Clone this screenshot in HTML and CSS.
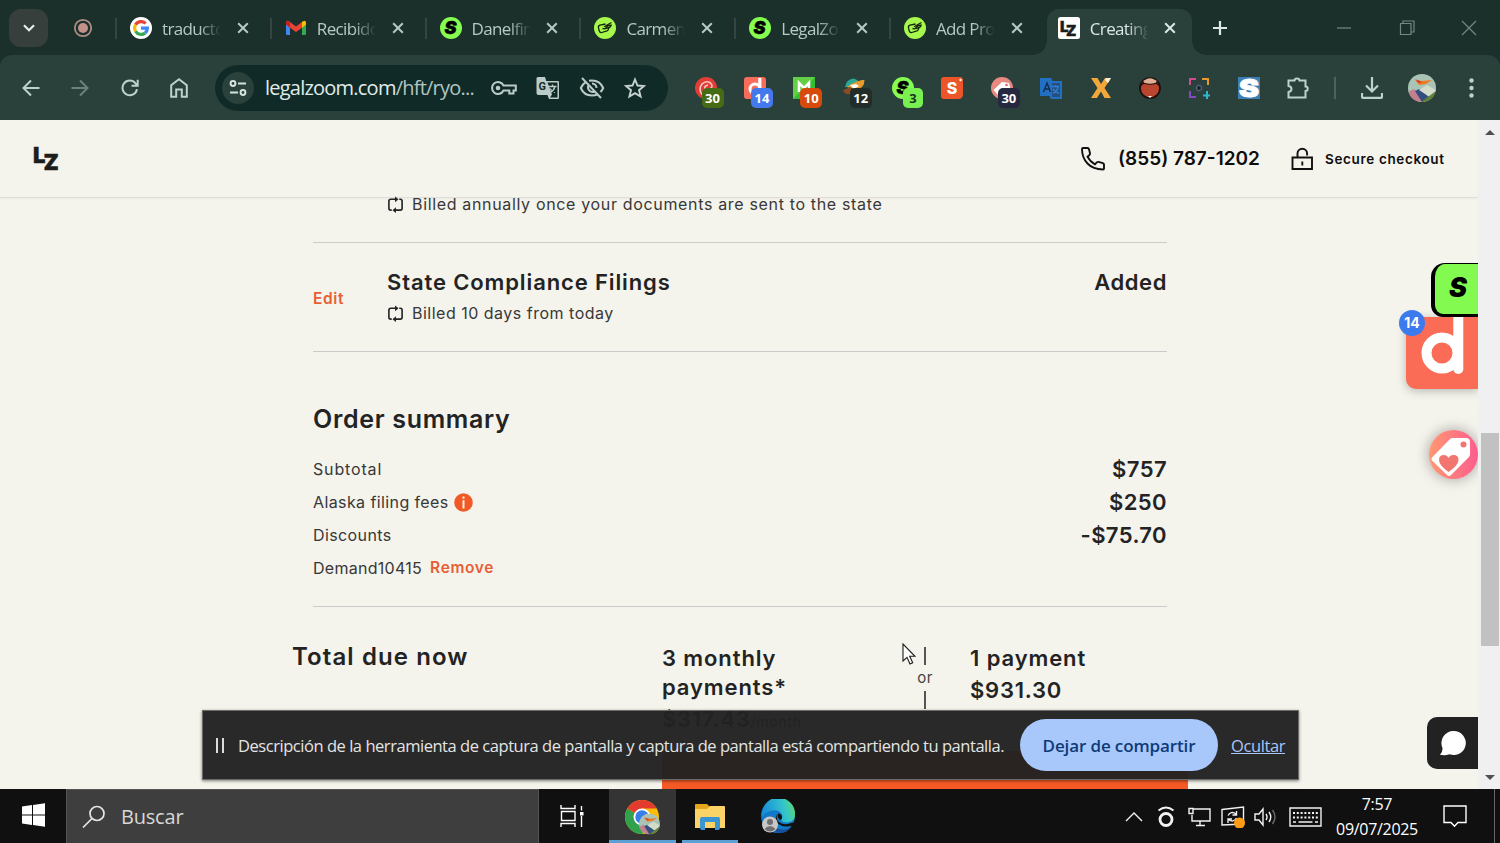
FILE: index.html
```html
<!DOCTYPE html>
<html lang="es">

<head>
    <meta charset="UTF-8">
    <meta name="viewport" content="width=device-width, initial-scale=1.0">
    <title>Creating your order</title>
    <link rel="stylesheet" href="styles.css">
</head>

<body>
    <!-- shared icons -->
    <svg class="defs" width="0" height="0">
        <symbol id="close" viewBox="0 0 12 12">
            <path d="M1.2 1.2l9.6 9.6M10.8 1.2L1.2 10.8" stroke="currentColor" stroke-width="2" fill="none" />
        </symbol>
        <symbol id="fav-s" viewBox="0 0 22 22">
            <circle cx="11" cy="11" r="11" fill="#86fb50" />
            <text x="10.6" y="17.3" text-anchor="middle" font-family="Inter" font-weight="900" font-style="italic" font-size="18" stroke="#000" stroke-width=".5">S</text>
        </symbol>
        <symbol id="fav-sign" viewBox="0 0 22 22">
            <circle cx="11" cy="11" r="11" fill="#a6f94c" />
            <path d="M11.500 7L6 8.200q-2 .7-1.500 2.600l.8 3.200q.5 2 2.500 1.500l5.200-1.700q1.500-.6 1.700-2.300M8.500 11.500l2 .3 2.700-.6M10 9.800l7.500-4.300M11.500 10.800q3-3.300 5.700-2.600-1 2.700-4.200 2.900" fill="none" stroke="#15240d" stroke-width="1.300" />
        </symbol>
        <symbol id="repeat" viewBox="0 0 18 18">
            <path d="M5 15H4Q2 15 2 13V5.500q0-2 2-2H10M13 3.500h1q2 0 2 2V13q0 2-2 2H8" fill="none" stroke="#232323" stroke-width="1.700" />
            <path d="M8.500.5l3.700 3-3.700 3zM9.500 12v6l-3.700-3z" fill="#232323" />
        </symbol>
        <symbol id="avatar" viewBox="0 0 28 28">
            <clipPath id="round"><circle cx="14" cy="14" r="14" /></clipPath>
            <g clip-path="url(#round)">
                <path d="M0 0h28v28H0z" fill="#a9c3b5" />
                <path d="M0 18l6-3 6 6 3 7H0z" fill="#c47f8f" />
                <path d="M7 17l4-2 10 8-7 5z" fill="#334f80" />
                <path d="M11 16l8-5 9 5-6 7z" fill="#d2dccb" />
                <path d="M13 28l15-11v11z" fill="#607f36" />
                <path d="M7 6l7 1 10-1-6 4-7 1z" fill="#ee7a22" />
                <path d="M7 5l7 3-3 1z" fill="#d5332b" />
            </g>
        </symbol>
    </svg>

    <div class="tabstrip">
        <div class="tab-search">
            <svg width="12" height="8" viewBox="0 0 12 8"><path d="M1 1.200l5 5 5-5" fill="none" stroke="#e6eeec" stroke-width="2.200" /></svg>
        </div>
        <div class="tab-pinned">
            <svg width="20" height="20" viewBox="0 0 20 20"><circle cx="10" cy="10" r="8.200" fill="none" stroke="#ab8f86" stroke-width="1.800" /><circle cx="10" cy="10" r="5" fill="#c4908a" /></svg>
        </div>
        <div class="tab">
            <svg class="favicon" viewBox="0 0 22 22">
                <circle cx="11" cy="11" r="11" fill="#fff" />
                <g fill="none" stroke-width="3.200">
                    <path d="M5.500 7.800A6.400 6.400 0 0 1 15.600 6.500" stroke="#ea4335" />
                    <path d="M5.500 14.200A6.400 6.400 0 0 1 5.500 7.800" stroke="#fbbc05" />
                    <path d="M15.100 15.900A6.400 6.400 0 0 1 5.500 14.200" stroke="#34a853" />
                    <path d="M11 11.100H17.400A6.400 6.400 0 0 1 15.100 15.900" stroke="#4285f4" />
                </g>
            </svg>
            <span class="tab-name">traducto</span>
            <svg class="tab-close"><use href="#close" /></svg>
        </div>
        <div class="tab">
            <svg class="favicon" viewBox="0 0 22 22">
                <path d="M1 5.500l4 3V18H2.200Q1 18 1 16.800z" fill="#4285f4" />
                <path d="M21 5.500l-4 3V18h2.800q1.200 0 1.200-1.200z" fill="#34a853" />
                <path d="M17 5l1-.8Q21 2.500 21 6v1.500l-4 3.200z" fill="#fbbc04" />
                <path d="M1 7.500V6Q1 2.500 4 4.200l7 5.300 6-4.500v5.700L11 15 5 10.700z" fill="#ea4335" />
                <path d="M1 7.500V6q0-2 1.600-2.200L5 5.500v5.200z" fill="#c5221f" />
            </svg>
            <span class="tab-name">Recibido</span>
            <svg class="tab-close"><use href="#close" /></svg>
        </div>
        <div class="tab">
            <svg class="favicon"><use href="#fav-s" /></svg>
            <span class="tab-name">Danelfin</span>
            <svg class="tab-close"><use href="#close" /></svg>
        </div>
        <div class="tab">
            <svg class="favicon"><use href="#fav-sign" /></svg>
            <span class="tab-name">Carmen</span>
            <svg class="tab-close"><use href="#close" /></svg>
        </div>
        <div class="tab">
            <svg class="favicon"><use href="#fav-s" /></svg>
            <span class="tab-name">LegalZo</span>
            <svg class="tab-close"><use href="#close" /></svg>
        </div>
        <div class="tab">
            <svg class="favicon"><use href="#fav-sign" /></svg>
            <span class="tab-name">Add Pro</span>
            <svg class="tab-close"><use href="#close" /></svg>
        </div>
        <div class="tab tab-active">
            <svg class="favicon" viewBox="0 0 22 22">
                <rect width="22" height="22" rx="2.500" fill="#fff" />
                <text class="lz" x="2" y="14.500" font-size="15">L</text>
                <text class="lz" x="8" y="18.500" font-size="15">Z</text>
            </svg>
            <span class="tab-name">Creating</span>
            <svg class="tab-close"><use href="#close" /></svg>
        </div>
        <svg class="new-tab" viewBox="0 0 14 14"><path d="M7 0v14M0 7h14" stroke="#dce8e4" stroke-width="2.200" /></svg>
        <div class="window-buttons">
            <svg width="16" height="16" viewBox="0 0 16 16"><path d="M1 8h14" /></svg>
            <svg width="16" height="16" viewBox="0 0 16 16"><path d="M1.500 3.500h10.500v11H1.500zM4 3.500V1h11v11h-3" /></svg>
            <svg width="16" height="16" viewBox="0 0 16 16"><path d="M1 1l14 14M15 1L1 15" /></svg>
        </div>
    </div>

    <div class="toolbar">
        <div class="nav-buttons">
            <svg width="18" height="18" viewBox="0 0 18 18"><path d="M17.500 9H2M9 1.500L1.500 9 9 16.500" /></svg>
            <svg class="dim" width="18" height="18" viewBox="0 0 18 18"><path d="M.5 9H16M9 1.500L16.500 9 9 16.500" /></svg>
            <svg width="18" height="18" viewBox="0 0 18 18"><path d="M16 10.200A7.300 7.300 0 1 1 14.500 4.300L16.500 6.500M16.700.8V6.800H10.500" /></svg>
            <svg width="18" height="20" viewBox="0 0 18 20"><path d="M1.200 18.800V7.200L9 1.300l7.800 5.900v11.600h-5V11.500H6.200v7.300z" /></svg>
        </div>
        <div class="address">
            <div class="site-info">
                <svg width="18" height="16" viewBox="0 0 18 16"><g fill="none" stroke="#d5e3df" stroke-width="2"><circle cx="4" cy="3.500" r="2.400" /><path d="M9 3.500h8M1 12.500h8" /><circle cx="14" cy="12.500" r="2.400" /></g></svg>
            </div>
            <span class="url">legalzoom.com<span class="path">/hft/ryo...</span></span>
            <svg width="26" height="16" viewBox="0 0 26 16"><path d="M12.500 5.500h12.300v5h-2.300v3h-4.200v-3h-5.800a6 6 0 1 1 0-5z" fill="none" stroke="#bccbc8" stroke-width="2" /><circle cx="7" cy="8" r="2.300" fill="#bccbc8" /></svg>
            <svg width="24" height="24" viewBox="0 0 24 24">
                <path d="M2 1h7l1.300 4H22q1 0 1 1v16q0 1-1 1H13l-1.500-4H2.500Q.5 19 .5 17V2.500Q.5 1 2 1z" fill="#bccbc8" />
                <path d="M11.500 6.500h10v15H14l2-3z" fill="#102b27" />
                <text x="2.500" y="14" font-family="Roboto" font-size="11" font-weight="700" fill="#102b27">G</text>
                <path d="M12.500 10.500h8M16.500 8.500v2M19 10.500q-1 4-5 6M14 12.500q2 3 5 4" stroke="#bccbc8" stroke-width="1.300" fill="none" />
            </svg>
            <svg width="26" height="24" viewBox="0 0 26 24"><g fill="none" stroke="#bccbc8" stroke-width="2"><path d="M7 5.800Q3.500 8 1.800 12 5 19.500 13 19.500q3 0 5.500-1.200M10 4.800q1.500-.3 3-.3 8 0 11.200 7.500-1 2.300-2.700 4M3 2l19 20" /><path d="M9.500 9.500a4.500 4.500 0 0 0 6 6M13 7.500a4.500 4.500 0 0 1 4.500 4.500" /></g></svg>
            <svg width="22" height="22" viewBox="0 0 22 22"><path d="M11 2.500l2.500 6 6.500.5-5 4.200 1.600 6.300L11 16.100l-5.600 3.400L7 13.200 2 9l6.500-.5z" fill="none" stroke="#c5d3d0" stroke-width="1.900" /></svg>
        </div>

        <div class="extensions">
            <div class="ext">
                <svg viewBox="0 0 22 22"><circle cx="11" cy="11" r="11" fill="#e03d36" /><path d="M7 17.500Q3 12 7 7q4-4 8.500-1 3 3 0 5.500-3 2-5.500 0Q9 9 13 8" fill="none" stroke="#f8c9c3" stroke-width="1.600" /></svg>
                <span class="badge olive">30</span>
            </div>
            <div class="ext">
                <svg viewBox="0 0 22 22"><rect width="22" height="22" rx="3" fill="#f76c5a" /><path d="M15.800 1v14" stroke="#fff" stroke-width="3.200" /><circle cx="11" cy="12" r="5" fill="none" stroke="#fff" stroke-width="3" /></svg>
                <span class="badge blue">14</span>
            </div>
            <div class="ext">
                <svg viewBox="0 0 22 22"><path d="M0 0h22v22H0z" fill="#35bd35" /><path d="M0 0h22L0 22z" fill="#63cf45" /><path d="M6 15V6l5 5 5-5v9" fill="none" stroke="#fff" stroke-width="2.600" /></svg>
                <span class="badge orange">10</span>
            </div>
            <div class="ext">
                <svg viewBox="0 0 22 22"><path d="M2 10Q3 2 11 1.500l4 2-4 7z" fill="#2aa998" /><path d="M4 10q6-5 15-7l2.500 0q0 9-9 9z" fill="#e99b2d" /><path d="M7 8l6-1 3 2-5 3z" fill="#fff" /><path d="M0 13l8-3v7q-7 1-8-4z" fill="#8c4b25" /></svg>
                <span class="badge dark">12</span>
            </div>
            <div class="ext">
                <svg><use href="#fav-s" /></svg>
                <span class="badge lime">3</span>
            </div>
            <div class="ext">
                <svg viewBox="0 0 22 22"><path d="M3 0h16q3 0 3 3v14q0 5-5 5H3q-3 0-3-3V3q0-3 3-3z" fill="#ec5528" /><circle cx="19.500" cy="3" r="1.200" fill="#fff" /><text x="11" y="17" text-anchor="middle" font-family="Inter" font-size="16" font-weight="800" fill="#fff">S</text></svg>
            </div>
            <div class="ext">
                <svg viewBox="0 0 22 22"><circle cx="11" cy="11" r="11" fill="#e98a80" /><path d="M2.500 13L11 5l7 1 2 8-9 8z" fill="#fff" /><circle cx="15.500" cy="8" r="1.300" fill="#d9646f" /></svg>
                <span class="badge navy">30</span>
            </div>
            <div class="ext">
                <svg viewBox="0 0 22 22"><path d="M0 1h11l1.500 3H22v18H11l-1.500-3H0z" fill="#2170c4" /><path d="M12 6h8v14h-8z" fill="#27507f" /><path d="M3.500 15L7 6l3.500 9M4.800 12h4.400" fill="none" stroke="#122c52" stroke-width="1.400" /><path d="M12 9.500h7M15.500 8v1.500M18 10q-1 5-5 6M13 12q3 4 6 4" fill="none" stroke="#2b7fd4" stroke-width="1.400" /></svg>
            </div>
            <div class="ext">
                <svg viewBox="0 0 22 22"><path d="M1 1h6.500l3.500 6 4-6h6l-6.500 10L21 21h-6.500L11 14.500 7 21H1l6.500-10z" fill="#f1a83b" /><path d="M16 1h5l-3 5-3-3z" fill="#f6f0df" /></svg>
            </div>
            <div class="ext">
                <svg viewBox="0 0 22 22"><circle cx="11" cy="11" r="10" fill="#b9452f" stroke="#190f0c" stroke-width="1.700" /><path d="M3.500 5q7.500-7.500 15 0-2 2-7.500 2T3.500 5z" fill="#e3ad98" /><path d="M1.500 8q3 0 3-3.500M20.500 8q-3 0-3-3.500M4.500 6q6.500 2.500 13 0" fill="none" stroke="#190f0c" stroke-width="1.200" /><path d="M9 19h4l-2 2z" fill="#fff" /></svg>
            </div>
            <div class="ext">
                <svg viewBox="0 0 22 22"><g fill="none" stroke-width="2"><path d="M2 8V2h6" stroke="#cf4b8e" /><path d="M14 2h6v6" stroke="#e9972f" /><path d="M2 14v6h6" stroke="#8647c4" /><path d="M19 14v8M15 18.500h8" stroke="#2eb6d0" /></g><circle cx="11" cy="11" r="5.500" fill="#313f47" /><circle cx="11" cy="11" r="2.500" fill="#17252a" stroke="#5d7785" /></svg>
            </div>
            <div class="ext">
                <svg viewBox="0 0 22 22"><path d="M0 0h22v22H0z" fill="#3d7fb3" /><text x="11" y="20" text-anchor="middle" font-family="Inter" font-size="25" font-weight="900" textLength="20" lengthAdjust="spacingAndGlyphs" fill="#fff" stroke="#fff">S</text></svg>
            </div>
            <div class="ext">
                <svg viewBox="0 0 22 22"><path d="M2 3.500h5.500a2.500 2 0 0 1 5 0H18.500v6a2.200 2.200 0 0 1 0 4.400V20.500H1.500v-5.500q3-.5 3-3t-3-3V3.500z" fill="none" stroke="#bcd2cc" stroke-width="2" /></svg>
            </div>
        </div>
        <span class="toolbar-line"></span>
        <svg class="download" viewBox="0 0 22 22"><path d="M11 0v14M5 8.500l6 6 6-6M1 16v3.500q0 1.300 1.300 1.300h17.400q1.300 0 1.300-1.300V16" fill="none" stroke="#bcd2cc" stroke-width="2.200" /></svg>
        <svg class="profile"><use href="#avatar" /></svg>
        <svg class="menu-dots" viewBox="0 0 5 20"><g fill="#bcd2cc"><circle cx="2.500" cy="2.500" r="2.200" /><circle cx="2.500" cy="10" r="2.200" /><circle cx="2.500" cy="17.500" r="2.200" /></g></svg>
    </div>

    <div class="viewport">
        <div class="page">
            <header class="site-header">
                <svg class="logo" viewBox="0 0 28 28">
                    <text class="lz" x="0" y="18" font-size="22">L</text>
                    <text class="lz" x="10.500" y="25" font-size="22">Z</text>
                </svg>
                <div class="phone">
                    <svg width="25" height="25" viewBox="0 0 25 25"><path d="M2 2h4.500q1.200 0 1.500 1.200l1 4q.2 1-.6 1.800L6.500 10.700q2.500 5 7.500 7.700l1.800-2q.8-.7 1.700-.5l4.300 1.200q1 .4 1.200 1.400V22.500q0 1-1 1Q12 23.300 6.500 17.500T1 3q0-1 1-1z" fill="none" stroke="#111" stroke-width="1.900" /></svg>
                    <span>(855) 787-1202</span>
                </div>
                <div class="secure">
                    <svg width="22" height="24" viewBox="0 0 22 24"><path d="M1.500 10.500h19.500v11.500H1.500zM6.500 10.500V6.500a4.800 4.800 0 0 1 9.600 0V8.500M11.300 14.500v4" fill="none" stroke="#111" stroke-width="1.900" /></svg>
                    <span>Secure checkout</span>
                </div>
            </header>

            <main class="order">
                <div class="billed first">
                    <svg><use href="#repeat" /></svg>
                    <span class="billed-annual">Billed annually once your documents are sent to the state</span>
                </div>
                <section class="item">
                    <a class="edit">Edit</a>
                    <div class="item-info">
                        <h3>State Compliance Filings</h3>
                        <div class="billed">
                            <svg><use href="#repeat" /></svg>
                            <span class="billed-days">Billed 10 days from today</span>
                        </div>
                    </div>
                    <span class="added">Added</span>
                </section>
                <section class="summary">
                    <h2>Order summary</h2>
                    <div class="row"><span class="subtotal">Subtotal</span><b>$757</b></div>
                    <div class="row">
                        <span>Alaska filing fees</span>
                        <svg class="info" viewBox="0 0 19 19"><circle cx="9.500" cy="9.500" r="9.300" fill="#f15a24" /><path d="M9.500 7.300v8.200M9.500 3.500v2.300" stroke="#fdeee4" stroke-width="2" /></svg>
                        <b>$250</b>
                    </div>
                    <div class="row"><span>Discounts</span><b>-$75.70</b></div>
                    <div class="row"><span class="coupon">Demand10415</span><a class="remove">Remove</a></div>
                </section>
                <section class="total">
                    <h3 class="due">Total due now</h3>
                    <div class="monthly">
                        <div>3 monthly payments*</div>
                        <div class="amount">$317.43<small>/month</small></div>
                    </div>
                    <div class="or"><i></i>or<i></i></div>
                    <div class="single">
                        <div>1 payment</div>
                        <div class="amount">$931.30</div>
                    </div>
                </section>
                <div class="pay-button"></div>
            </main>

            <!-- widgets that the extensions leave over the page -->
            <div class="widget-s">
                <svg width="24" height="26" viewBox="0 0 24 26"><text x="11" y="22" text-anchor="middle" font-family="Inter" font-size="27" font-weight="900" font-style="italic">S</text></svg>
            </div>
            <div class="widget-d">
                <svg width="72" height="72" viewBox="0 0 72 72"><circle cx="36" cy="36" r="15.500" fill="none" stroke="#fff" stroke-width="10" /><path d="M52.300 0v52" stroke="#fff" stroke-width="10" stroke-linecap="round" /></svg>
                <span class="count">14</span>
            </div>
            <div class="widget-tag">
                <svg width="48" height="48" viewBox="0 0 48 48"><path d="M3.500 27L21 9q1-1 2.500-1H37q4 0 4 4v12q0 2-1 3L22 45q-2 2-4 0L3.500 31q-2-2 0-4z" fill="#fff" /><circle cx="34.500" cy="14.500" r="3" fill="#f2756f" /><path d="M19.500 42Q10 35 10 30q0-5 5-5 3 0 4.500 3 1.500-3 5-3 5 0 5 5 0 5-10 12z" fill="#f2756f" /></svg>
            </div>
            <div class="chat">
                <svg width="28" height="28" viewBox="0 0 28 28"><path d="M14.500 2A12 12 0 1 1 10.500 25.200Q6 27 1 25.800 3.800 23 3.500 19A12 12 0 0 1 14.500 2z" fill="#fff" /></svg>
            </div>
            <svg class="cursor" viewBox="0 0 14 22"><path d="M1 1v17l4-3.700L8 21l2.700-1.200-3-6.500H13z" fill="#fff" stroke="#1b1b1b" stroke-width="1.100" /></svg>
        </div>
        <div class="scrollbar">
            <span class="arrow-up"></span>
            <span class="thumb"></span>
            <span class="arrow-down"></span>
        </div>
    </div>

    <div class="sharing">
        <span class="pause"></span>
        <span class="sharing-text">Descripción de la herramienta de captura de pantalla y captura de pantalla está compartiendo tu pantalla.</span>
        <button class="stop">Dejar de compartir</button>
        <a class="hide">Ocultar</a>
    </div>

    <div class="taskbar">
        <div class="start">
            <svg width="24" height="24" viewBox="0 0 24 24"><path d="M0 3.500l10-1.400v9.400H0zM11 2l12-1.700v11.200H11zM0 12.500h10v9.400L0 20.500zM11 12.500h12v11.200L11 22z" fill="#fff" /></svg>
        </div>
        <div class="search">
            <svg width="24" height="24" viewBox="0 0 24 24"><circle cx="15" cy="8.500" r="7" fill="none" stroke="#e6e6e6" stroke-width="1.700" /><path d="M10 13.500L1 22.500" stroke="#e6e6e6" stroke-width="1.700" /></svg>
            <span>Buscar</span>
        </div>
        <div class="task task-view">
            <svg width="24" height="22" viewBox="0 0 24 22"><path d="M1 0v3.500h14V0M1 22v-3.500h14V22M1.500 6.500h13.500v9H1.500zM21.500 1v4.500M21.500 11v11" fill="none" stroke="#fff" stroke-width="1.400" /><path d="M20 7h3.500v3.500H20z" fill="#fff" /></svg>
        </div>
        <div class="task task-current">
            <svg width="36" height="36" viewBox="0 0 36 36">
                <circle cx="17" cy="17" r="17" fill="#fbbc05" />
                <path d="M17 17L2.300 8.500A17 17 0 0 0 17 34l6-10z" fill="#31a24c" />
                <path d="M17 17L2.300 8.500A17 17 0 0 1 31.700 8.500H17z" fill="#e33b2e" />
                <circle cx="17" cy="17" r="8.500" fill="#fff" /><circle cx="17" cy="17" r="6.700" fill="#3b7de8" />
                <svg x="14" y="13.500" width="21" height="21"><use href="#avatar" /></svg>
            </svg>
        </div>
        <div class="task task-open">
            <svg width="30" height="28" viewBox="0 0 30 28"><path d="M0 2q0-1 1-1h11l3 3-3 3H0z" fill="#e5a51d" /><path d="M0 6h12l3-3h14q1 0 1 1v21H0z" fill="#fbd367" /><path d="M5 25V16q0-2 2-2h16q2 0 2 2v9q0 2-2 2h-3v-8H10v8H7q-2 0-2-2z" fill="#3b95d3" /></svg>
        </div>
        <div class="task">
            <svg width="34" height="34" viewBox="0 0 34 34">
                <defs>
                    <linearGradient id="edge" x1="0" x2="1" y1=".2" y2="0"><stop offset="0" stop-color="#1a8fd8" /><stop offset=".6" stop-color="#33c4ce" /><stop offset="1" stop-color="#5fdb60" /></linearGradient>
                </defs>
                <circle cx="17" cy="17" r="17" fill="#1278c8" />
                <path d="M1 14A16.500 16.500 0 0 1 34 16q0 7-8 7.500-6 0-6-3 2-2 1-5-3-5-10-4Q4 13 1 18z" fill="url(#edge)" />
                <path d="M12 17q-3 9 6 13 7 2 12-2-3 5-9 6-11 0-14-9 0-6 5-8z" fill="#15509c" />
                <path d="M17 14.500q-3 5 1 8.500 5 4 12 1l5-1v2q-5 3-10 2.500-8-.5-10-6-1-4 2-7z" fill="#101010" />
                <path d="M17 14.500q3 0 4 3 0 2-1 3.500-4-1-3-6.500z" fill="#101010" />
                <circle cx="9" cy="25.500" r="8" fill="#c7c7c7" /><circle cx="9" cy="23" r="3" fill="#6f6f6f" /><path d="M3.500 30q5.500-6 11 0-5.500 5-11 0z" fill="#6f6f6f" />
            </svg>
        </div>
        <div class="tray">
            <svg width="18" height="10" viewBox="0 0 18 10"><path d="M1 9l8-8 8 8" /></svg>
            <svg width="18" height="22" viewBox="0 0 18 22"><circle cx="9" cy="13.500" r="6" stroke-width="2.800" /><path d="M1.500 4.500q7.500-6 15 0" stroke-width="2" /></svg>
            <svg width="23" height="20" viewBox="0 0 23 20"><path d="M5 2h17v12H4V8M12 14v4M8 18.500h9M1 1.500h4v5H1z" /></svg>
            <svg width="24" height="22" viewBox="0 0 24 22"><path d="M1 3.500L22.500 1v17L1 19z" /><path d="M7 9.500q3-5 8-1.500M15.500 5v4h-4M15.500 12q-3 5-8 1.500M7 17v-4h4" /><circle cx="18.500" cy="17" r="5.500" fill="#ff9b14" stroke="none" /></svg>
            <svg width="24" height="20" viewBox="0 0 24 20"><path d="M1 7h4l4-5v16l-4-5H1zM12 7q2 3 0 6M15 5q3.500 5 0 10" /><path d="M18.500 3q5 7 0 14" opacity=".4" /></svg>
            <svg width="33" height="20" viewBox="0 0 33 20"><path d="M1 1h31v18H1z" /><path d="M4 6h25M4 10.500h25" stroke-width="1.800" stroke-dasharray="2 1.800" /><path d="M4 15h3M9.500 15h14M26 15h3" /></svg>
        </div>
        <div class="clock"><span>7:57</span><span>09/07/2025</span></div>
        <svg class="notice" viewBox="0 0 24 24"><path d="M1 2h22v16.500h-8l-3.500 3.800-3.500-3.800H1z" fill="none" stroke="#fff" stroke-width="1.400" /></svg>
        <span class="desktop-edge"></span>
    </div>
</body>

</html>
```

FILE: styles.css
```css
* {
    box-sizing: border-box;
}

body {
    margin: 0;
    width: 1500px;
    height: 843px;
    overflow: hidden;
    display: flex;
    flex-direction: column;
    background: #1c302b;
    font-family: "Open Sans", "Noto Sans", sans-serif;
}

h2,
h3 {
    margin: 0;
    font-weight: 600;
}

svg {
    flex: none;
}

.defs {
    position: absolute;
}

.lz {
    font-family: Inter, sans-serif;
    font-weight: 900;
    fill: #1d1d1d;
    stroke: #1d1d1d;
    stroke-width: .4;
}

/* tabs */
.tabstrip {
    height: 55px;
    display: flex;
    align-items: flex-end;
    background: #1c302b;
    color: #b4cac4;
    font-size: 17px;
}

.tab-search {
    width: 39px;
    height: 38px;
    margin: 0 0 8px 9px;
    border-radius: 12px;
    background: #373f3c;
    display: flex;
    align-items: center;
    justify-content: center;
}

.tab-pinned {
    width: 67px;
    height: 46px;
    padding: 9px 0 0 25px;
}

.tab {
    width: 154.800px;
    height: 46px;
    padding: 0 21px 8px 15px;
    display: flex;
    align-items: center;
    background: linear-gradient(#37443f, #37443f) 0 9px / 2px 21px no-repeat;
}

.favicon {
    width: 22px;
    height: 22px;
    margin-right: 10px;
}

.tab-name {
    width: 62px;
    white-space: nowrap;
    letter-spacing: -.65px;
    -webkit-mask-image: linear-gradient(90deg, #000 60%, transparent 95%);
    mask-image: linear-gradient(90deg, #000 60%, transparent 95%);
}

.tab-close {
    width: 12px;
    height: 12px;
    margin-left: auto;
}

.tab-active {
    position: relative;
    width: 145px;
    margin-left: 3px;
    padding: 0 16px 8px 11px;
    border-radius: 12px 12px 0 0;
    background: #29403b;
    color: #dbe7e4;
}

.tab-active::before,
.tab-active::after {
    content: "";
    position: absolute;
    bottom: 0;
    width: 14px;
    height: 14px;
}

.tab-active::before {
    left: -14px;
    background: radial-gradient(circle at 0 0, transparent 13.500px, #29403b 14px);
}

.tab-active::after {
    right: -14px;
    background: radial-gradient(circle at 100% 0, transparent 13.500px, #29403b 14px);
}

.new-tab {
    width: 14px;
    height: 14px;
    margin: 0 0 20px 21px;
}

.window-buttons {
    display: flex;
    gap: 46.500px;
    margin: 0 23px 19px auto;
    fill: none;
    stroke: #768782;
    stroke-width: 1.200;
}

/* toolbar */
.toolbar {
    height: 65px;
    display: flex;
    align-items: center;
    padding-left: 22px;
    background: #29403b;
    border-radius: 12px 12px 0 0;
}

.nav-buttons {
    width: 193px;
    display: flex;
    gap: 31.300px;
    align-items: center;
    fill: none;
    stroke: #bcd2cc;
    stroke-width: 2;
}

.dim {
    opacity: .45;
}

.address {
    width: 453px;
    height: 46px;
    padding-left: 7px;
    border-radius: 23px;
    background: #102b27;
    display: flex;
    align-items: center;
    gap: 19px;
}

.site-info {
    width: 32px;
    height: 32px;
    margin-right: -8px;
    border-radius: 50%;
    background: #29403b;
    display: flex;
    align-items: center;
    justify-content: center;
}

.url {
    width: 207px;
    color: #e0ebe8;
    font-size: 20px;
    letter-spacing: -.77px;
    white-space: nowrap;
}

.path {
    color: #b3c4c0;
}

.extensions {
    display: grid;
    grid-template-columns: repeat(13, 49.400px);
    margin-left: 26.500px;
}

.ext {
    position: relative;
    height: 22px;
}

.ext svg {
    width: 22px;
    height: 22px;
}

.badge {
    position: absolute;
    left: 7px;
    top: 11px;
    min-width: 22px;
    height: 20px;
    border-radius: 5px;
    color: #fff;
    font-size: 13px;
    font-weight: 700;
    line-height: 20px;
    text-align: center;
}

.olive {
    background: #466b17;
}

.blue {
    background: #4379ec;
}

.orange {
    background: #d84a0b;
}

.dark {
    background: #222d2a;
}

.lime {
    background: #78f050;
    color: #17351d;
    left: 11px;
    min-width: 20px;
}

.navy {
    background: #25283f;
}

.toolbar-line {
    width: 2px;
    height: 22px;
    margin-left: -3px;
    background: #4c635d;
}

.download {
    width: 22px;
    height: 22px;
    margin-left: 25px;
}

.profile {
    width: 28px;
    height: 28px;
    margin-left: 25px;
}

.menu-dots {
    width: 5px;
    height: 20px;
    margin-left: 33px;
}

/* page */
.viewport {
    height: 669px;
    display: flex;
    background: #f4f3ec;
    color: #232323;
    font-family: Inter, sans-serif;
}

.page {
    position: relative;
    width: 1478px;
    overflow: hidden;
}

.site-header {
    height: 78px;
    display: flex;
    align-items: center;
    padding: 0 31px 0 33px;
    border-bottom: 1px solid #dfded8;
    box-shadow: 0 1px 2px rgba(0, 0, 0, .04);
    color: #0d0d0d;
}

.logo {
    width: 28px;
    height: 28px;
    margin-right: auto;
}

.phone,
.secure {
    display: flex;
    align-items: center;
    gap: 12px;
    white-space: nowrap;
}

.phone {
    width: 210px;
    font-size: 19px;
    font-weight: 600;
}

.secure {
    width: 156px;
    font-size: 13.500px;
    font-weight: 600;
    letter-spacing: .65px;
}

.order {
    width: 854px;
    margin-left: 313px;
}

.billed {
    display: flex;
    align-items: center;
    gap: 8px;
    font-size: 16px;
    color: #383838;
    white-space: nowrap;
}

.billed svg {
    width: 17px;
    height: 17px;
}

.billed-annual {
    letter-spacing: .66px;
}

.billed-days {
    letter-spacing: .5px;
}

.first {
    height: 45px;
    padding: 0 0 32px 74px;
    border-bottom: 1px solid #cbcbcb;
}

.item {
    height: 109px;
    display: flex;
    border-bottom: 1px solid #cbcbcb;
}

.edit,
.remove {
    color: #e65f35;
    font-size: 15.500px;
    font-weight: 600;
    letter-spacing: .65px;
}

.edit {
    width: 74px;
    padding-top: 46px;
}

.item-info h3 {
    margin-top: 24px;
    font-size: 22px;
    line-height: 30px;
    letter-spacing: .88px;
}

.item-info .billed {
    margin-top: 6px;
}

.added {
    margin: 24px 0 0 auto;
    font-size: 22px;
    font-weight: 600;
    line-height: 30px;
    letter-spacing: .6px;
}

.summary {
    height: 255px;
    padding-top: 50px;
    border-bottom: 1px solid #cbcbcb;
}

.summary h2 {
    height: 50px;
    font-size: 25px;
    line-height: 34px;
    letter-spacing: .68px;
}

.row {
    height: 33px;
    display: flex;
    align-items: center;
    font-size: 16px;
    letter-spacing: .4px;
    color: #383838;
}

.row b {
    margin-left: auto;
    color: #232323;
    font-size: 22px;
    font-weight: 600;
}

.row .subtotal {
    letter-spacing: .85px;
}

.row .coupon {
    letter-spacing: .28px;
}

.info {
    width: 19px;
    height: 19px;
    margin: 2px 0 0 5px;
}

.remove {
    margin-left: 8px;
}

.total {
    height: 144px;
    display: flex;
    margin-left: -21px;
    font-size: 22px;
    font-weight: 600;
    line-height: 29px;
    letter-spacing: .9px;
}

.due {
    width: 370px;
    padding-top: 35px;
    font-size: 24px;
    letter-spacing: 1.100px;
}

.monthly {
    width: 180px;
    padding-top: 37px;
}

.amount {
    margin-top: 3px;
    letter-spacing: .75px;
}

.amount small {
    font-size: 14px;
    font-weight: 400;
}

.or {
    width: 90px;
    margin-left: 38px;
    padding-top: 40px;
    display: flex;
    flex-direction: column;
    align-items: center;
    color: #444;
    font-size: 15px;
    font-weight: 400;
    line-height: 26px;
    letter-spacing: .4px;
}

.or i {
    width: 2px;
    height: 18px;
    background: #555;
}

.single {
    padding-top: 37px;
    white-space: nowrap;
}

.pay-button {
    width: 526px;
    height: 60px;
    margin-left: 349px;
    background: #f55a26;
}

.widget-s {
    position: absolute;
    right: 0;
    top: 143px;
    z-index: 1;
    width: 47px;
    height: 54px;
    padding: 11px 0 0 12px;
    border: solid #000;
    border-width: 1px 0 3px 4px;
    border-radius: 14px 0 0 12px;
    background: #83fa50;
}

.widget-d {
    position: absolute;
    right: 0;
    top: 197px;
    width: 72px;
    height: 72px;
    border-radius: 0 0 0 10px;
    background: #fa6c55;
    box-shadow: 0 2px 10px rgba(0, 0, 0, .25);
}

.count {
    position: absolute;
    left: -7px;
    top: -7px;
    z-index: 2;
    width: 26px;
    height: 26px;
    border-radius: 50%;
    background: #3c7aee;
    color: #fff;
    font-size: 14px;
    font-weight: 700;
    line-height: 26px;
    text-align: center;
}

.widget-tag {
    position: absolute;
    right: 0;
    top: 310px;
    width: 49px;
    height: 49px;
    border-radius: 50%;
    background: linear-gradient(90deg, #ff9872, #fc5d8e);
    box-shadow: 0 0 14px rgba(0, 0, 0, .35);
}

.chat {
    position: absolute;
    right: 0;
    top: 597px;
    width: 51px;
    height: 52px;
    padding: 12px;
    border-radius: 10px 0 0 10px;
    background: #222;
}

.cursor {
    position: absolute;
    left: 902px;
    top: 523px;
    width: 14px;
    height: 22px;
}

.scrollbar {
    width: 22px;
    padding: 10px 1px 9px 3px;
    display: flex;
    flex-direction: column;
    align-items: center;
    background: #f0f0f0;
}

.arrow-up,
.arrow-down {
    border: 5px solid transparent;
}

.arrow-up {
    border-top: 0;
    border-bottom-color: #505050;
}

.arrow-down {
    margin-top: auto;
    border-bottom: 0;
    border-top-color: #505050;
}

.thumb {
    width: 18px;
    height: 213px;
    margin-top: 298px;
    background: #c1c1c1;
}

/* screen sharing bar, floats over the browser */
.sharing {
    position: absolute;
    left: 202px;
    top: 710px;
    width: 1097px;
    height: 70px;
    padding: 0 13px;
    display: flex;
    align-items: center;
    border: 1px solid #6c6c6a;
    background: rgba(34, 34, 34, .97);
    box-shadow: 0 1px 3px rgba(0, 0, 0, .5);
    color: #e4e4e4;
    font-size: 16.500px;
    white-space: nowrap;
}

.pause {
    width: 8px;
    height: 15px;
    border: solid #dcdcdc;
    border-width: 0 2px;
}

.sharing-text {
    width: 768px;
    margin-left: 14px;
    letter-spacing: -.46px;
}

.stop {
    width: 198px;
    height: 52px;
    margin-left: 14px;
    padding: 0;
    border: 0;
    border-radius: 26px;
    background: #a8c7fa;
    color: #0d3b78;
    font-family: inherit;
    font-size: 17px;
    font-weight: 600;
    letter-spacing: -.12px;
}

.hide {
    margin-left: 13px;
    color: #a8c7fa;
    text-decoration: underline;
    letter-spacing: -.4px;
}

/* windows taskbar */
.taskbar {
    height: 54px;
    display: flex;
    align-items: center;
    background: #101010;
    color: #fff;
}

.start {
    width: 66px;
    padding: 3px 0 0 22px;
}

.search {
    width: 473px;
    height: 54px;
    padding-left: 15px;
    display: flex;
    align-items: center;
    gap: 15px;
    border: 1px solid #555;
    border-bottom: 0;
    background: #3e3e3e;
    color: #d8d8d8;
    font-size: 20px;
    letter-spacing: -.2px;
}

.task {
    width: 67px;
    height: 54px;
    display: flex;
    align-items: center;
    justify-content: center;
}

.task-view {
    width: 70px;
    padding-right: 4px;
}

.task-current {
    padding-top: 6px;
    background: #343434;
    border-bottom: 3px solid #5b9fd4;
}

.task-open {
    width: 56px;
    margin: 0 6px;
    padding-top: 4px;
    border-bottom: 3px solid #5b9fd4;
}

.tray {
    margin-left: auto;
    display: flex;
    align-items: center;
    gap: 11px;
    padding-top: 1px;
    fill: none;
    stroke: #f2f2f2;
    stroke-width: 1.400;
}

.tray svg:nth-child(2) {
    margin: 0 2px 0 3px;
}

.tray svg:nth-child(4) {
    margin: 0 -2px 0 -1px;
}

.clock {
    width: 84px;
    margin-left: 13px;
    padding-top: 1px;
    display: flex;
    flex-direction: column;
    align-items: center;
    font-size: 16px;
    line-height: 25px;
    letter-spacing: -.3px;
}

.notice {
    width: 24px;
    height: 24px;
    margin: 0 27px 0 24px;
}

.desktop-edge {
    width: 6px;
    height: 54px;
    border-left: 1px solid #666;
}
```
